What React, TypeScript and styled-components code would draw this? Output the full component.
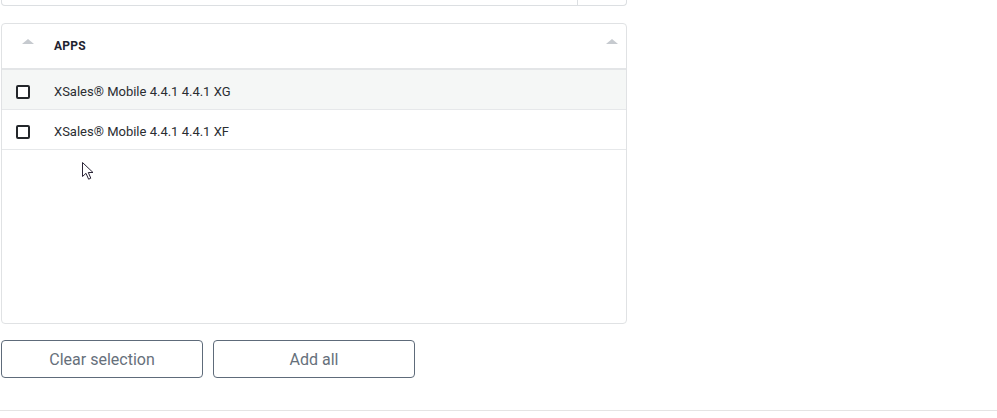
import React from "react";
import styled, { createGlobalStyle } from "styled-components";

const GlobalStyle = createGlobalStyle`
  html, body {
    margin: 0;
    padding: 0;
    background: #ffffff;
    font-family: Roboto, "Liberation Sans", Arial, sans-serif;
  }
`;

const Page = styled.div`
  position: relative;
  width: 997px;
  height: 418px;
  overflow: hidden;
  background: #fff;
`;

const Column = styled.div`
  width: 626px;
  padding-left: 1px;
  display: flex;
  flex-direction: column;
`;

const TopField = styled.div`
  height: 5px;
  display: flex;
  border: 1px solid #dcdfe2;
  border-top: none;
  border-radius: 0 0 4px 4px;
`;

const TopFieldInput = styled.div`
  flex: 1;
`;

const TopFieldAddon = styled.div`
  width: 48px;
  border-left: 1px solid #dcdfe2;
`;

const Table = styled.div`
  margin-top: 17px;
  height: 299px;
  border: 1px solid #e0e2e4;
  border-radius: 4px;
  display: flex;
  flex-direction: column;
`;

const HeaderRow = styled.div`
  height: 44px;
  display: flex;
  align-items: center;
  border-bottom: 2px solid #e3e5e7;
`;

const SortCell = styled.div<{ $width: number }>`
  width: ${(p) => p.$width}px;
  display: flex;
  justify-content: center;
  align-items: center;
  align-self: stretch;
  padding-bottom: 9px;
`;

const SortArrow = styled.span`
  width: 0;
  height: 0;
  border-left: 6px solid transparent;
  border-right: 6px solid transparent;
  border-bottom: 5px solid #c6cacf;
`;

const HeaderLabel = styled.div`
  flex: 1;
  font-size: 12px;
  font-weight: 700;
  color: #1f2430;
  letter-spacing: 0.2px;
`;

const Row = styled.div<{ $shaded?: boolean }>`
  height: 40px;
  box-sizing: border-box;
  display: flex;
  align-items: center;
  padding-top: 4px;
  border-bottom: 1px solid #e6e8ea;
  background: ${(p) => (p.$shaded ? "#f5f7f6" : "#fff")};
`;

const CheckCell = styled.div`
  width: 52px;
  display: flex;
  justify-content: center;
  padding-right: 11px;
  box-sizing: border-box;
`;

const Checkbox = styled.span`
  width: 10px;
  height: 10px;
  border: 2px solid #24272b;
  border-radius: 2px;
  background: #fff;
`;

const RowLabel = styled.div`
  font-size: 13px;
  color: #2a2d31;
`;

const Actions = styled.div`
  margin-top: 16px;
  display: flex;
  gap: 10px;
`;

const Button = styled.button`
  width: 202px;
  height: 38px;
  background: #fff;
  border: 1px solid #5e6b7a;
  border-radius: 4px;
  font-family: Roboto, "Liberation Sans", Arial, sans-serif;
  font-size: 16px;
  color: #66707b;
  cursor: pointer;
  padding: 0;
`;

const Divider = styled.div`
  margin-top: 32px;
  width: 997px;
  border-top: 1px solid #e4e4e4;
`;

const Cursor = styled.svg`
  position: absolute;
  left: 82px;
  top: 162px;
`;

const apps = ["XSales® Mobile 4.4.1 4.4.1 XG", "XSales® Mobile 4.4.1 4.4.1 XF"];

export default function App() {
  return (
    <Page>
      <GlobalStyle />
      <Column>
        <TopField>
          <TopFieldInput />
          <TopFieldAddon />
        </TopField>
        <Table>
          <HeaderRow>
            <SortCell $width={52}>
              <SortArrow />
            </SortCell>
            <HeaderLabel>APPS</HeaderLabel>
            <SortCell $width={28}>
              <SortArrow />
            </SortCell>
          </HeaderRow>
          {apps.map((name, i) => (
            <Row key={name} $shaded={i === 0}>
              <CheckCell>
                <Checkbox />
              </CheckCell>
              <RowLabel>{name}</RowLabel>
            </Row>
          ))}
        </Table>
        <Actions>
          <Button>Clear selection</Button>
          <Button>Add all</Button>
        </Actions>
      </Column>
      <Divider />
      <Cursor width="14" height="20" viewBox="0 0 14 20">
        <path
          d="M0.5 0.5 L0.5 14.5 L4 11.3 L6.6 17.2 L8.8 16.2 L6.3 10.5 L11 10.5 Z"
          fill="#ffffff"
          stroke="#2a2436"
          strokeWidth="1"
          strokeLinejoin="round"
        />
      </Cursor>
    </Page>
  );
}
